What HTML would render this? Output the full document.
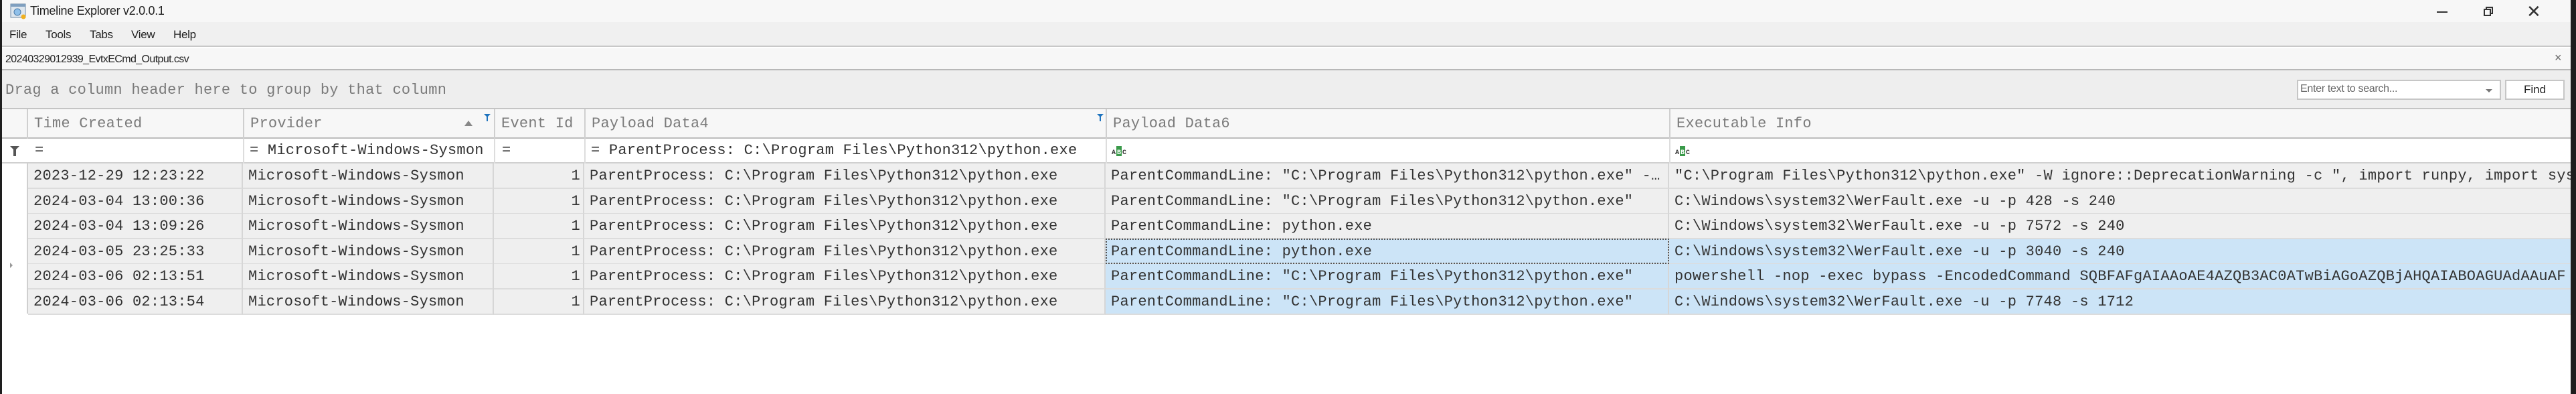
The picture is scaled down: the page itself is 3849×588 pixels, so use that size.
<!DOCTYPE html>
<html><head><meta charset="utf-8"><style>
*{margin:0;padding:0;box-sizing:border-box}
body{width:3849px;height:588px;background:#1e1e1e;position:relative;overflow:hidden;font-family:"Liberation Sans",sans-serif}
.win{position:absolute;left:3px;top:0;width:3838px;height:588px;background:#fff;overflow:hidden}
.abs{position:absolute}
.mono{font-family:"Liberation Mono","DejaVu Sans Mono",monospace;font-size:22px;letter-spacing:.25px;white-space:nowrap}
.ui{font-size:17px;color:#222;white-space:nowrap;letter-spacing:-.3px}
.cell{position:absolute;overflow:hidden;padding-left:8px;line-height:37px;color:#333;border-right:2px solid #d6d6d6;border-bottom:2px solid #dcdcdc}
.hd{position:absolute;top:163px;height:44px;line-height:44px;padding-left:9px;color:#7a7a7a;border-left:2px solid #cfcfcf}
</style></head><body>
<div class="win">
<!-- title bar -->
<div class="abs" style="left:0;top:0;width:3838px;height:33px;background:#f7f7f7"></div>
<svg class="abs" style="left:12px;top:5px" width="26" height="24" viewBox="0 0 26 24"><rect x="1" y="1" width="22" height="20" fill="#dde6ee" stroke="#6d8aa6"/><rect x="1" y="1" width="22" height="4" fill="#7f9fbf"/><circle cx="11" cy="13" r="5" fill="#8fc0ea" stroke="#4a7aa8"/><circle cx="20" cy="20" r="3.5" fill="#f0b020"/></svg>
<div class="abs ui" style="left:42px;top:6px;font-size:18px">Timeline Explorer v2.0.0.1</div>
<div class="abs" style="left:3638px;top:17px;width:16px;height:2px;background:#333"></div>
<div class="abs" style="left:3711px;top:10px;width:11px;height:11px;border:2px solid #333;background:#f7f7f7"></div>
<div class="abs" style="left:3708px;top:13px;width:11px;height:11px;border:2px solid #333;background:#f7f7f7"></div>
<div class="abs" style="left:3772px;top:2px;font-size:26px;color:#333">✕</div>
<!-- menu -->
<div class="abs" style="left:0;top:33px;width:3838px;height:37px;background:#f0f0f0;border-bottom:2px solid #c8c8c8"></div>
<div class="abs ui" style="left:11px;top:42px">File</div>
<div class="abs ui" style="left:65px;top:42px">Tools</div>
<div class="abs ui" style="left:131px;top:42px">Tabs</div>
<div class="abs ui" style="left:193px;top:42px">View</div>
<div class="abs ui" style="left:256px;top:42px">Help</div>
<!-- tab bar -->
<div class="abs" style="left:0;top:72px;width:3838px;height:33px;background:#f7f7f7;border-bottom:2px solid #b8b8b8"></div>
<div class="abs ui" style="left:5px;top:80px;font-size:16px;letter-spacing:-.6px">20240329012939_EvtxECmd_Output.csv</div>
<div class="abs" style="left:3814px;top:76px;font-size:18px;color:#666">×</div>
<!-- group panel -->
<div class="abs" style="left:0;top:105px;width:3838px;height:58px;background:#eeeeee;border-bottom:2px solid #c4c4c4"></div>
<div class="abs mono" style="left:5px;top:122px;color:#7a7a7a">Drag a column header here to group by that column</div>
<div class="abs" style="left:3429px;top:119px;width:305px;height:30px;background:#fff;border:2px solid #c6c6c6"></div>
<div class="abs ui" style="left:3434px;top:124px;color:#666;font-size:16px">Enter text to search...</div>
<div class="abs" style="left:3711px;top:133px;width:0;height:0;border-left:5px solid transparent;border-right:5px solid transparent;border-top:5px solid #777"></div>
<div class="abs" style="left:3740px;top:119px;width:89px;height:30px;background:#fff;border:2px solid #c6c6c6;text-align:center;line-height:26px;font-size:17px;color:#222">Find</div>
<!-- header -->
<div class="abs" style="left:0;top:163px;width:3838px;height:44px;background:#f7f7f7;border-bottom:2px solid #bdbdbd"></div>
<div class="abs" style="left:37px;top:163px;width:2px;height:305px;background:#cfcfcf"></div>
<div class="hd mono" style="left:37px;width:323px">Time Created</div>
<div class="hd mono" style="left:360px;width:375px">Provider</div>
<div class="hd mono" style="left:735px;width:135px">Event Id</div>
<div class="hd mono" style="left:870px;width:779px">Payload Data4</div>
<div class="hd mono" style="left:1649px;width:842px">Payload Data6</div>
<div class="hd mono" style="left:2491px;width:1350px">Executable Info</div>
<div class="abs" style="left:691px;top:180px;width:0;height:0;border-left:6px solid transparent;border-right:6px solid transparent;border-bottom:8px solid #888"></div>
<svg class="abs" style="left:720px;top:170px" width="10" height="11"><path d="M0 0H10L6 4V11H4V4Z" fill="#1e73be"/></svg>
<svg class="abs" style="left:1636px;top:170px" width="10" height="11"><path d="M0 0H10L6 4V11H4V4Z" fill="#1e73be"/></svg>
<!-- filter row -->
<div class="abs" style="left:0;top:207px;width:3838px;height:37px;background:#fff;border-bottom:2px solid #d0d0d0"></div>
<svg class="abs" style="left:12px;top:218px" width="14" height="15"><path d="M0 0H14L9 5V15H5V5Z" fill="#555"/></svg>
<div class="abs" style="left:360px;top:207px;width:2px;height:37px;background:#ddd"></div>
<div class="abs" style="left:735px;top:207px;width:2px;height:37px;background:#ddd"></div>
<div class="abs" style="left:870px;top:207px;width:2px;height:37px;background:#ddd"></div>
<div class="abs" style="left:1649px;top:207px;width:2px;height:37px;background:#ddd"></div>
<div class="abs" style="left:2491px;top:207px;width:2px;height:37px;background:#ddd"></div>
<div class="abs mono" style="left:49px;top:212px;color:#333">=</div>
<div class="abs mono" style="left:370px;top:212px;color:#333">= Microsoft-Windows-Sysmon</div>
<div class="abs mono" style="left:747px;top:212px;color:#333">=</div>
<div class="abs mono" style="left:880px;top:212px;color:#333">= ParentProcess: C:\Program Files\Python312\python.exe</div>
<svg class="abs" style="left:1658px;top:218px" width="24" height="15"><rect x="7" y="0" width="8" height="15" fill="#3a9a4a"/><text x="0" y="12" font-family="Liberation Mono" font-size="10" font-weight="bold" fill="#333">A</text><text x="8" y="12" font-family="Liberation Mono" font-size="10" font-weight="bold" fill="#fff">B</text><text x="16" y="12" font-family="Liberation Mono" font-size="10" font-weight="bold" fill="#333">C</text></svg>
<svg class="abs" style="left:2500px;top:218px" width="24" height="15"><rect x="7" y="0" width="8" height="15" fill="#3a9a4a"/><text x="0" y="12" font-family="Liberation Mono" font-size="10" font-weight="bold" fill="#333">A</text><text x="8" y="12" font-family="Liberation Mono" font-size="10" font-weight="bold" fill="#fff">B</text><text x="16" y="12" font-family="Liberation Mono" font-size="10" font-weight="bold" fill="#333">C</text></svg>
<!-- rows -->
<div id="rows"></div>
<div class="abs" style="left:12px;top:392px;width:0;height:0;border-top:4px solid transparent;border-bottom:4px solid transparent;border-left:4px solid #999"></div>
<div class="abs" style="left:1649px;top:356px;width:842px;height:38px;border:2px dotted #555"></div>
</div>
<script>
var d=[["2023-12-29 12:23:22",'ParentCommandLine: "C:\\Program Files\\Python312\\python.exe" -…','"C:\\Program Files\\Python312\\python.exe" -W ignore::DeprecationWarning -c ", import runpy, import sys'],
["2024-03-04 13:00:36",'ParentCommandLine: "C:\\Program Files\\Python312\\python.exe"','C:\\Windows\\system32\\WerFault.exe -u -p 428 -s 240'],
["2024-03-04 13:09:26",'ParentCommandLine: python.exe','C:\\Windows\\system32\\WerFault.exe -u -p 7572 -s 240'],
["2024-03-05 23:25:33",'ParentCommandLine: python.exe','C:\\Windows\\system32\\WerFault.exe -u -p 3040 -s 240'],
["2024-03-06 02:13:51",'ParentCommandLine: "C:\\Program Files\\Python312\\python.exe"','powershell -nop -exec bypass -EncodedCommand SQBFAFgAIAAoAE4AZQB3AC0ATwBiAGoAZQBjAHQAIABOAGUAdAAuAF'],
["2024-03-06 02:13:54",'ParentCommandLine: "C:\\Program Files\\Python312\\python.exe"','C:\\Windows\\system32\\WerFault.exe -u -p 7748 -s 1712']];
function esc(s){return s.replace(/&/g,'&amp;').replace(/</g,'&lt;')}
var h='';
for(var i=0;i<6;i++){var t=244+Math.round(i*37.5),g='#efefef',b=i>=3?'#cce4f7':g;
function c(l,w,bg,txt,ex){h+='<div class="cell mono" style="left:'+l+'px;top:'+t+'px;width:'+w+'px;height:38px;background:'+bg+';'+(ex||'')+'">'+esc(txt)+'</div>';}
c(39,321,g,d[i][0]);c(360,375,g,'Microsoft-Windows-Sysmon');c(735,135,g,'1','text-align:right;padding-right:4px');
c(870,779,g,'ParentProcess: C:\\Program Files\\Python312\\python.exe');c(1649,842,b,d[i][1]);c(2491,1347,b,d[i][2],'border-right:none');}
document.getElementById('rows').innerHTML=h;
</script>
</body></html>
